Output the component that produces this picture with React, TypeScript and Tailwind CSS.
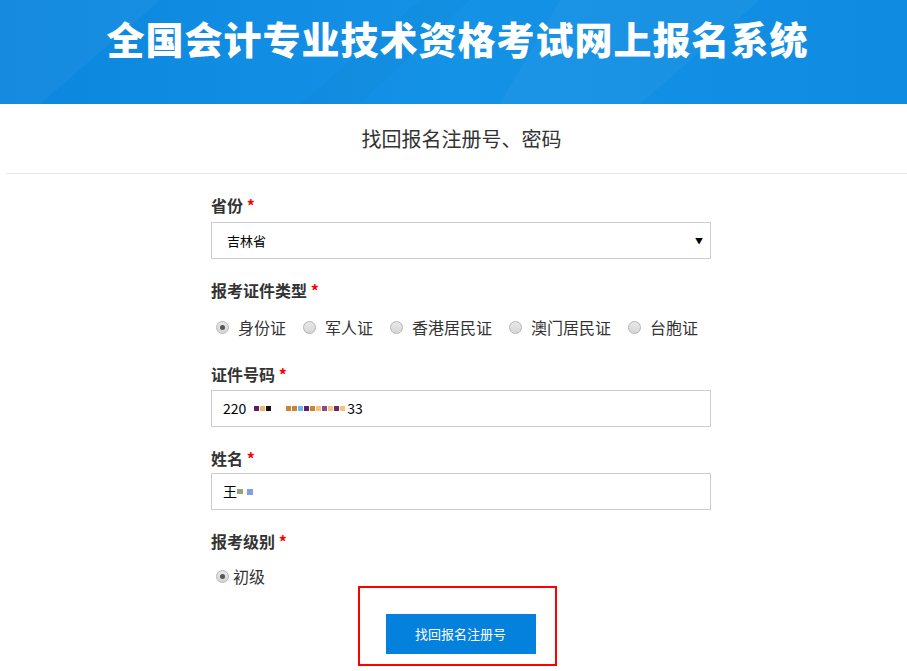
import React, { useState } from 'react'

const CJK = '"Noto Sans CJK SC", "Noto Sans", sans-serif'

const idTypes = ['身份证', '军人证', '香港居民证', '澳门居民证', '台胞证']

// masked digits in the id number (mosaic blocks)
const idBlocks = ['#5a1f6a', '#f3b46a', '#111', '', '#c9852f', '#c9852f', '#6fb6f0', '#5a1f6a', '#c9852f', '#f7c27a', '#8a4a8a', '#f7c27a', '#6a2a6a', '#f7c27a']

function Label({ text }: { text: string }) {
  return (
    <div className="text-[16px] font-bold text-[#333] leading-[22px]">
      {text} <span className="text-[#f00]">*</span>
    </div>
  )
}

function Radio({ checked, label, gap = 9, onClick }: { checked: boolean; label: string; gap?: number; onClick?: () => void }) {
  return (
    <label className="flex items-center cursor-pointer" onClick={onClick}>
      <span className="w-[13px] h-[13px] rounded-full border border-[#b5b5b5] bg-gradient-to-b from-[#e8e8e8] to-[#d6d6d6] flex items-center justify-center">
        {checked && <span className="w-[5px] h-[5px] rounded-full bg-[#555]" />}
      </span>
      <span className="text-[16px] text-[#333]" style={{ marginLeft: gap }}>{label}</span>
    </label>
  )
}

export default function App() {
  const [idType, setIdType] = useState(0)

  return (
    <div className="w-[907px] h-[671px] bg-white overflow-hidden" style={{ fontFamily: CJK }}>
      {/* banner */}
      <div className="relative h-[104px] bg-gradient-to-r from-[#0c86de] via-[#1492e6] to-[#0f8ce1] overflow-hidden">
        <svg className="absolute inset-0" width="907" height="104">
          <polygon points="0,0 160,0 40,104 0,104" fill="#ffffff" opacity="0.04" />
          <polygon points="560,0 760,0 640,104 500,104" fill="#ffffff" opacity="0.035" />
          <polygon points="300,104 420,0 470,0 360,104" fill="#000000" opacity="0.02" />
        </svg>
        <h1 className="relative text-center pt-[13px] pl-[8px] text-[38px] leading-[50px] font-black text-white tracking-[1px]">
          全国会计专业技术资格考试网上报名系统
        </h1>
      </div>

      {/* title */}
      <div className="h-[70px] ml-[6px] pl-[10px] border-b border-[#e8e8e8] flex items-center justify-center">
        <div className="text-[20px] text-[#333]">找回报名注册号、密码</div>
      </div>

      {/* form */}
      <div className="w-[500px] ml-[211px] pt-[20px]">
        <Label text="省份" />
        <div className="mt-[6px] h-[37px] border border-[#ccc] flex items-center justify-between pl-[15px] pr-[7px]">
          <span className="text-[13px] text-black">吉林省</span>
          <span className="text-[8px] text-black">▼</span>
        </div>

        <div className="mt-[20px]">
          <Label text="报考证件类型" />
        </div>
        <div className="mt-[14px] flex items-center gap-[17px] pl-[5px]">
          {idTypes.map((t, i) => (
            <Radio key={t} label={t} checked={idType === i} onClick={() => setIdType(i)} />
          ))}
        </div>

        <div className="mt-[24px]">
          <Label text="证件号码" />
        </div>
        <div className="mt-[5px] h-[37px] border border-[#ccc] flex items-center pl-[11px]">
          <span className="text-[14px] text-black">220</span>
          <span className="ml-[8px] flex items-center gap-[1px]">
            {idBlocks.map((c, i) => (
              <span key={i} className="w-[5px] h-[5px]" style={{ background: c || 'transparent', marginLeft: i === 4 ? 8 : 0 }} />
            ))}
          </span>
          <span className="ml-[2px] text-[14px] text-black">33</span>
        </div>

        <div className="mt-[20px]">
          <Label text="姓名" />
        </div>
        <div className="mt-[4px] h-[37px] border border-[#ccc] flex items-center pl-[11px]">
          <span className="text-[14px] text-black">王</span>
          <span className="w-[6px] h-[5px] bg-[#9aa07a]" />
          <span className="ml-[4px] w-[6px] h-[6px] bg-[#7fa0e8]" />
        </div>

        <div className="mt-[20px]">
          <Label text="报考级别" />
        </div>
        <div className="mt-[12px] pl-[5px]">
          <Radio label="初级" checked gap={4} />
        </div>

        <div className="-mt-[2px] w-[199px] h-[80px] ml-[147px] border-2 border-[#f00] pt-[26px] pl-[6px] flex justify-center">
          <button className="w-[150px] h-[40px] bg-[#0381dc] text-white text-[13px]">找回报名注册号</button>
        </div>
      </div>
    </div>
  )
}
